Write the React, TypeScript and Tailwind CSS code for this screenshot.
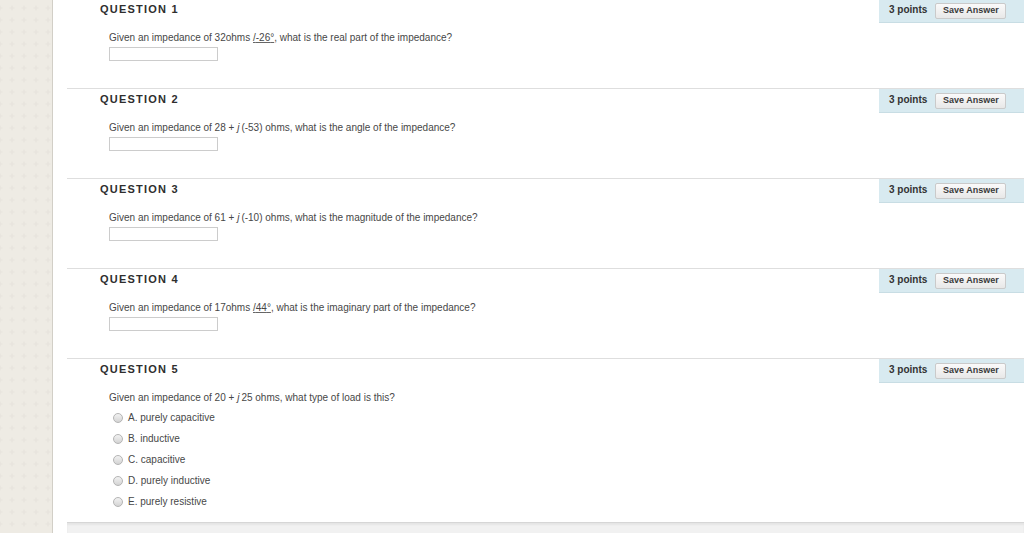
import { ReactNode } from 'react'

const FONT = { fontFamily: '"Liberation Sans", Arial, sans-serif' }

function Angle({ value }: { value: string }) {
  return <span className="underline decoration-[#666]">/{value}°</span>
}

function J() {
  return <i className="pr-[2px]">j</i>
}

function PointsBox() {
  return (
    <div className="flex h-[24px] w-[145px] items-center bg-[#d8eaf0] border-b border-[#c8dde4] pl-[10px]">
      <span className="pb-[2px] text-[10px] font-bold text-[#333]">3 points</span>
      <button className="ml-[8px] mt-[1px] h-[16px] w-[71px] rounded-[2px] border border-[#cacaca] bg-gradient-to-b from-[#fafafa] to-[#e8e8e8] text-[9px] font-bold text-[#3a3a3a]">
        Save Answer
      </button>
    </div>
  )
}

function Question({ num, text, children, last }: { num: number; text: ReactNode; children: ReactNode; last?: boolean }) {
  return (
    <div className={`border-t border-[#dedede] ${last ? 'pb-[10px]' : 'h-[90px]'}`}>
      <div className="flex h-[24px] items-center justify-between">
        <h2 className="pb-[4px] pl-[33px] text-[11px] font-bold tracking-[0.11em] text-[#2e2e2e]">QUESTION {num}</h2>
        <PointsBox />
      </div>
      <div className="pl-[42px] pt-[8px]">
        <p className="h-[14px] text-[10px] leading-[14px] text-[#474747]">{text}</p>
        {children}
      </div>
    </div>
  )
}

function AnswerInput() {
  return <input type="text" className="mt-[2px] block h-[14px] w-[109px] border border-[#cccccc] bg-white outline-none" />
}

const options = ['A. purely capacitive', 'B. inductive', 'C. capacitive', 'D. purely inductive', 'E. purely resistive']

export default function App() {
  return (
    <div className="flex h-screen overflow-hidden bg-white" style={FONT}>
      <aside className="relative w-[53px] shrink-0 border-r border-[#d2cfc7] bg-[#eeebe4]">
        <svg className="absolute inset-0 h-full w-full" aria-hidden>
          <defs>
            <pattern id="plus" width="12" height="12" patternUnits="userSpaceOnUse" x="6" y="2">
              <path d="M6 3.5v5M3.5 6h5" stroke="#e6e3dc" strokeWidth="1.2" />
            </pattern>
          </defs>
          <rect width="100%" height="100%" fill="url(#plus)" />
        </svg>
      </aside>
      <main className="ml-[14px] mt-[-2px] flex-1">
        <Question num={1} text={<>Given an impedance of 32ohms <Angle value="-26" />, what is the real part of the impedance?</>}>
          <AnswerInput />
        </Question>
        <Question num={2} text={<>Given an impedance of 28 + <J />(-53) ohms, what is the angle of the impedance?</>}>
          <AnswerInput />
        </Question>
        <Question num={3} text={<>Given an impedance of 61 + <J />(-10) ohms, what is the magnitude of the impedance?</>}>
          <AnswerInput />
        </Question>
        <Question num={4} text={<>Given an impedance of 17ohms <Angle value="44" />, what is the imaginary part of the impedance?</>}>
          <AnswerInput />
        </Question>
        <Question num={5} last text={<>Given an impedance of 20 + <J />25 ohms, what type of load is this?</>}>
          <div className="mt-[2px]">
            {options.map((opt) => (
              <label key={opt} className="flex h-[21px] items-center text-[10px] text-[#474747]">
                <span className="ml-[4px] mr-[5px] h-[10px] w-[10px] rounded-full border border-[#b4b4b4] bg-gradient-to-b from-[#f2f2f2] to-[#d4d4d4]" />
                {opt}
              </label>
            ))}
          </div>
        </Question>
        <div className="h-[40px] border-t border-[#d6d6d6] bg-[#f1f1f1] shadow-[inset_0_2px_2px_rgba(0,0,0,0.05)]" />
      </main>
    </div>
  )
}
